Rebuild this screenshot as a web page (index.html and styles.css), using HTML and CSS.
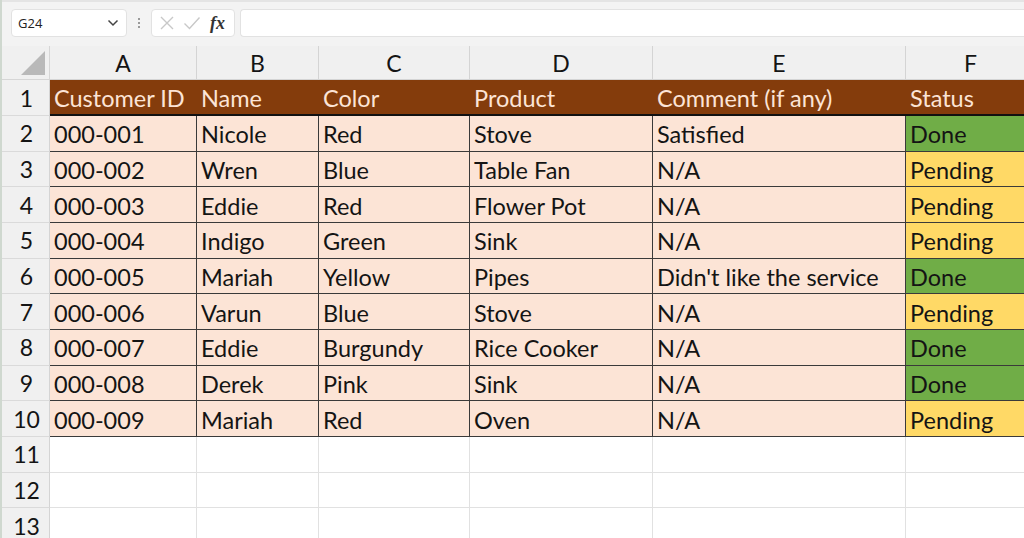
FILE: index.html
```html
<!DOCTYPE html>
<html>
<head>
<meta charset="utf-8">
<link rel="stylesheet" href="styles.css">
</head>
<body>
<div class="app">
  <div class="toolbar">
    <div class="namebox">
      <span class="ref">G24</span>
      <svg class="chev" width="12" height="8" viewBox="0 0 12 8"><path d="M1.5 1.5 L6 6 L10.5 1.5" fill="none" stroke="#444" stroke-width="1.5"/></svg>
    </div>
    <div class="grip"><i></i><i></i><i></i></div>
    <div class="fxbox">
      <svg width="16" height="16" viewBox="0 0 16 16"><path d="M2 2 L14 14 M14 2 L2 14" stroke="#c8c8c8" stroke-width="1.4" fill="none"/></svg>
      <svg width="18" height="16" viewBox="0 0 18 16"><path d="M1.5 8.5 L6.5 13.5 L16.5 2.5" stroke="#c8c8c8" stroke-width="1.4" fill="none"/></svg>
      <span class="fx">fx</span>
    </div>
    <div class="formula"></div>
  </div>
  <div class="sheet">
    <div class="corner"><svg width="24" height="24" viewBox="0 0 24 24"><path d="M24 0 L24 24 L0 24 Z" fill="#b9b9b9"/></svg></div>
    <div class="colh">A</div><div class="colh">B</div><div class="colh">C</div><div class="colh">D</div><div class="colh">E</div><div class="colh">F</div>

    <div class="rowh">1</div>
    <div class="hd">Customer ID</div><div class="hd">Name</div><div class="hd">Color</div><div class="hd">Product</div><div class="hd">Comment (if any)</div><div class="hd">Status</div>

    <div class="rowh">2</div>
    <div class="c">000-001</div><div class="c">Nicole</div><div class="c">Red</div><div class="c">Stove</div><div class="c">Satisfied</div><div class="c done">Done</div>
    <div class="rowh">3</div>
    <div class="c">000-002</div><div class="c">Wren</div><div class="c">Blue</div><div class="c">Table Fan</div><div class="c">N/A</div><div class="c pend">Pending</div>
    <div class="rowh">4</div>
    <div class="c">000-003</div><div class="c">Eddie</div><div class="c">Red</div><div class="c">Flower Pot</div><div class="c">N/A</div><div class="c pend">Pending</div>
    <div class="rowh">5</div>
    <div class="c">000-004</div><div class="c">Indigo</div><div class="c">Green</div><div class="c">Sink</div><div class="c">N/A</div><div class="c pend">Pending</div>
    <div class="rowh">6</div>
    <div class="c">000-005</div><div class="c">Mariah</div><div class="c">Yellow</div><div class="c">Pipes</div><div class="c">Didn't like the service</div><div class="c done">Done</div>
    <div class="rowh">7</div>
    <div class="c">000-006</div><div class="c">Varun</div><div class="c">Blue</div><div class="c">Stove</div><div class="c">N/A</div><div class="c pend">Pending</div>
    <div class="rowh">8</div>
    <div class="c">000-007</div><div class="c">Eddie</div><div class="c">Burgundy</div><div class="c">Rice Cooker</div><div class="c">N/A</div><div class="c done">Done</div>
    <div class="rowh">9</div>
    <div class="c">000-008</div><div class="c">Derek</div><div class="c">Pink</div><div class="c">Sink</div><div class="c">N/A</div><div class="c done">Done</div>
    <div class="rowh">10</div>
    <div class="c">000-009</div><div class="c">Mariah</div><div class="c">Red</div><div class="c">Oven</div><div class="c">N/A</div><div class="c pend">Pending</div>

    <div class="rowh">11</div>
    <div class="e"></div><div class="e"></div><div class="e"></div><div class="e"></div><div class="e"></div><div class="e"></div>
    <div class="rowh">12</div>
    <div class="e"></div><div class="e"></div><div class="e"></div><div class="e"></div><div class="e"></div><div class="e"></div>
    <div class="rowh">13</div>
    <div class="e"></div><div class="e"></div><div class="e"></div><div class="e"></div><div class="e"></div><div class="e"></div>
  </div>
</div>
</body>
</html>
```

FILE: styles.css
```css
* { box-sizing: border-box; }
html, body { margin: 0; padding: 0; }
body {
  width: 1024px;
  height: 538px;
  overflow: hidden;
  background: #fff;
  font-family: Lato, "Open Sans", sans-serif;
  color: #141414;
}
.app { width: 1024px; height: 538px; overflow: hidden; border-left: 2px solid #cfd8cf; }
.toolbar {
  height: 46px;
  background: #f3f3f3;
  border-top: 2px solid #e4e4e4;
  display: flex;
  align-items: center;
  padding: 0 0 2px 9px;
}
.namebox {
  width: 116px;
  height: 28px;
  background: #fff;
  border: 1px solid #e2e2e2;
  border-radius: 4px;
  display: flex;
  align-items: center;
  justify-content: space-between;
  padding: 0 7px 0 6px;
  font-family: "Open Sans", sans-serif;
  font-size: 13px;
  color: #222;
}
.grip {
  width: 24px;
  display: flex;
  flex-direction: column;
  align-items: center;
  gap: 2px;
}
.grip i { width: 2px; height: 2px; background: #9a9a9a; display: block; }
.fxbox {
  width: 84px;
  height: 28px;
  background: #fff;
  border: 1px solid #e2e2e2;
  border-radius: 4px;
  display: flex;
  align-items: center;
  gap: 8px;
  padding: 0 6px 0 7px;
}
.fx {
  font-family: "Liberation Serif", serif;
  font-style: italic;
  font-weight: bold;
  font-size: 18px;
  color: #333;
  margin-left: 1px;
}
.formula {
  flex: 1;
  height: 28px;
  margin-left: 5px;
  background: #fff;
  border: 1px solid #e2e2e2;
  border-right: none;
  border-radius: 4px 0 0 4px;
}
.sheet {
  display: grid;
  grid-template-columns: 48px 147px 122px 151px 183px 253px 130px;
  grid-template-rows: 34px 36px repeat(12, 35.67px);
}
.corner {
  background: #f0f0f0;
  border-right: 1px solid #d6d6d6;
  border-bottom: 1px solid #d6d6d6;
  display: flex;
  align-items: flex-end;
  justify-content: flex-end;
  padding: 0 4px 4px 0;
}
.colh {
  background: #f0f0f0;
  border-right: 1px solid #d4d4d4;
  border-bottom: 1px solid #d4d4d4;
  display: flex;
  align-items: center;
  justify-content: center;
  font-family: Lato, sans-serif;
  font-size: 23px;
  color: #141414;
  padding-top: 1px;
}
.rowh {
  background: #f0f0f0;
  border-right: 1px solid #d4d4d4;
  border-bottom: 1px solid #dadada;
  display: flex;
  align-items: center;
  justify-content: center;
  font-family: Lato, sans-serif;
  font-size: 23px;
  color: #141414;
  padding-left: 2px;
}
.hd {
  background: #843c0c;
  color: #fce4d6;
  border-bottom: 2px solid #111;
  font-size: 23.5px;
  display: flex;
  align-items: center;
  padding-left: 4px;
  white-space: nowrap;
}
.c {
  background: #fce4d6;
  border-right: 1px solid #3a3a3a;
  border-bottom: 1px solid #3a3a3a;
  font-size: 23.5px;
  display: flex;
  align-items: center;
  padding-left: 4px;
  padding-top: 2px;
  white-space: nowrap;
}
.hd { padding-top: 2px; }
.c.done { background: #70ad47; }
.c.pend { background: #ffd966; }
.e {
  border-right: 1px solid #e1e1e1;
  border-bottom: 1px solid #e1e1e1;
}
```
